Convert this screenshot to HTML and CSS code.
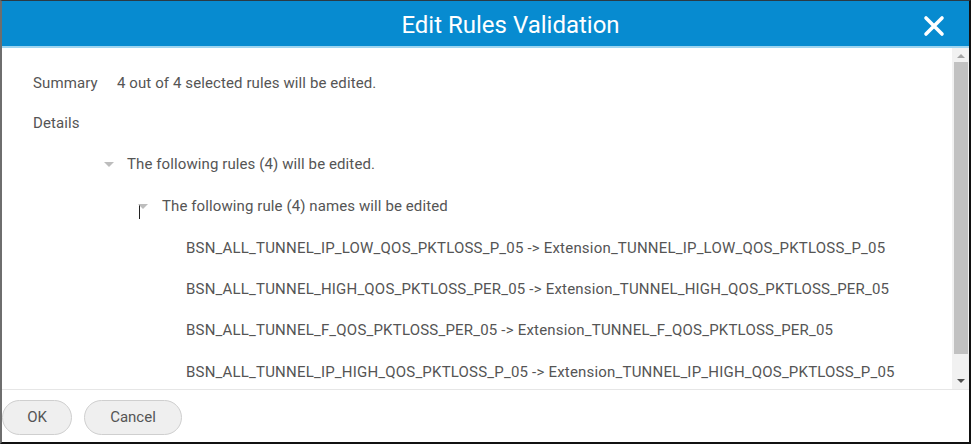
FILE: index.html
```html
<!DOCTYPE html>
<html>
<head>
<meta charset="utf-8">
<link rel="stylesheet" href="styles.css">
</head>
<body>
<div class="dialog">
  <div class="header">
    <div class="title">Edit Rules Validation</div>
    <div class="close">
      <svg width="22" height="22" viewBox="0 0 22 22"><path d="M3 3 L19 19 M19 3 L3 19" stroke="#fff" stroke-width="3.6" stroke-linecap="round"/></svg>
    </div>
  </div>
  <div class="body">
    <div class="content">
      <div class="row r1"><span class="label">Summary</span><span>4 out of 4 selected rules will be edited.</span></div>
      <div class="row r1"><span class="label">Details</span></div>
      <div class="row r2 lvl1"><span class="tri"></span><span>The following rules (4) will be edited.</span></div>
      <div class="row r2 lvl2"><span class="caret"></span><span class="tri"></span><span>The following rule (4) names will be edited</span></div>
      <div class="row rule">BSN_ALL_TUNNEL_IP_LOW_QOS_PKTLOSS_P_05 -&gt; Extension_TUNNEL_IP_LOW_QOS_PKTLOSS_P_05</div>
      <div class="row rule">BSN_ALL_TUNNEL_HIGH_QOS_PKTLOSS_PER_05 -&gt; Extension_TUNNEL_HIGH_QOS_PKTLOSS_PER_05</div>
      <div class="row rule">BSN_ALL_TUNNEL_F_QOS_PKTLOSS_PER_05 -&gt; Extension_TUNNEL_F_QOS_PKTLOSS_PER_05</div>
      <div class="row rule">BSN_ALL_TUNNEL_IP_HIGH_QOS_PKTLOSS_P_05 -&gt; Extension_TUNNEL_IP_HIGH_QOS_PKTLOSS_P_05</div>
    </div>
    <div class="scrollbar">
      <div class="arrow up"></div>
      <div class="track"><div class="thumb"></div></div>
      <div class="arrow down"></div>
    </div>
  </div>
  <div class="footer">
    <button class="btn ok">OK</button>
    <button class="btn cancel">Cancel</button>
  </div>
</div>
</body>
</html>
```
FILE: styles.css
```css
html, body {
  margin: 0;
  padding: 0;
  background: #fff;
}
body {
  font-family: Roboto, "Liberation Sans", sans-serif;
  width: 974px;
  height: 444px;
  overflow: hidden;
}
.dialog {
  box-sizing: border-box;
  width: 971px;
  height: 444px;
  border-top: 1px solid #2a3a44;
  border-left: 2px solid #6e6e6e;
  border-right: 2px solid #111;
  border-bottom: 2px solid #111;
  display: flex;
  flex-direction: column;
  background: #fff;
}
.header {
  height: 45px;
  background: #078bd0;
  border-bottom: 2px solid #9fd5f0;
  display: flex;
  align-items: center;
  justify-content: center;
  position: relative;
  flex: none;
}
.title {
  color: #fff;
  font-size: 24px;
  margin-left: 50px;
  margin-top: 2px;
}
.close {
  position: absolute;
  right: 24px;
  top: 14px;
  width: 22px;
  height: 22px;
}
.body {
  flex: 1;
  display: flex;
  min-height: 0;
}
.content {
  flex: 1;
  padding: 15px 0 0 31px;
  overflow: hidden;
  color: #555;
  font-size: 15px;
  letter-spacing: 0.1px;
}
.row {
  height: 41.3px;
  display: flex;
  align-items: center;
  white-space: nowrap;
}
.row.r1 {
  height: 40px;
}
.row.r2 {
  height: 42px;
}
.label {
  width: 84px;
  flex: none;
}
.lvl1 {
  padding-left: 71px;
}
.lvl2 {
  padding-left: 106px;
}
.tri {
  width: 0;
  height: 0;
  border-left: 5px solid transparent;
  border-right: 5px solid transparent;
  border-top: 5px solid #bdbdbd;
  margin-right: 13px;
  margin-top: 1px;
}
.lvl2 .tri {
  margin-right: 14px;
}
.caret {
  width: 1px;
  height: 15px;
  background: #222;
  margin-right: -2px;
  margin-top: 10px;
}
.rule {
  padding-left: 153px;
  font-size: 15px;
  letter-spacing: 0.2px;
}
.scrollbar {
  width: 17px;
  flex: none;
  background: #f1f1f1;
  display: flex;
  flex-direction: column;
  align-items: center;
}
.arrow {
  height: 16px;
  width: 17px;
  display: flex;
  align-items: center;
  justify-content: center;
  flex: none;
}
.arrow::after {
  content: "";
  border-left: 4px solid transparent;
  border-right: 4px solid transparent;
}
.arrow.up::after {
  border-bottom: 4px solid #a3a3a3;
}
.arrow.down::after {
  border-top: 4px solid #505050;
}
.track {
  flex: 1;
  width: 100%;
  display: flex;
  flex-direction: column;
  align-items: center;
}
.thumb {
  width: 14px;
  height: 292px;
  background: #c1c1c1;
  margin-top: -2px;
}
.footer {
  height: 53px;
  flex: none;
  border-top: 1px solid #e6e6e6;
  display: flex;
  align-items: center;
  gap: 12px;
  padding-left: 0;
  padding-top: 2px;
  box-sizing: border-box;
}
.btn {
  height: 35px;
  border-radius: 18px;
  border: 1px solid #cfcfcf;
  background: #efefef;
  color: #555;
  font-family: Roboto, "Liberation Sans", sans-serif;
  font-size: 15px;
  padding: 0;
}
.ok {
  width: 70px;
}
.cancel {
  width: 98px;
}
```
